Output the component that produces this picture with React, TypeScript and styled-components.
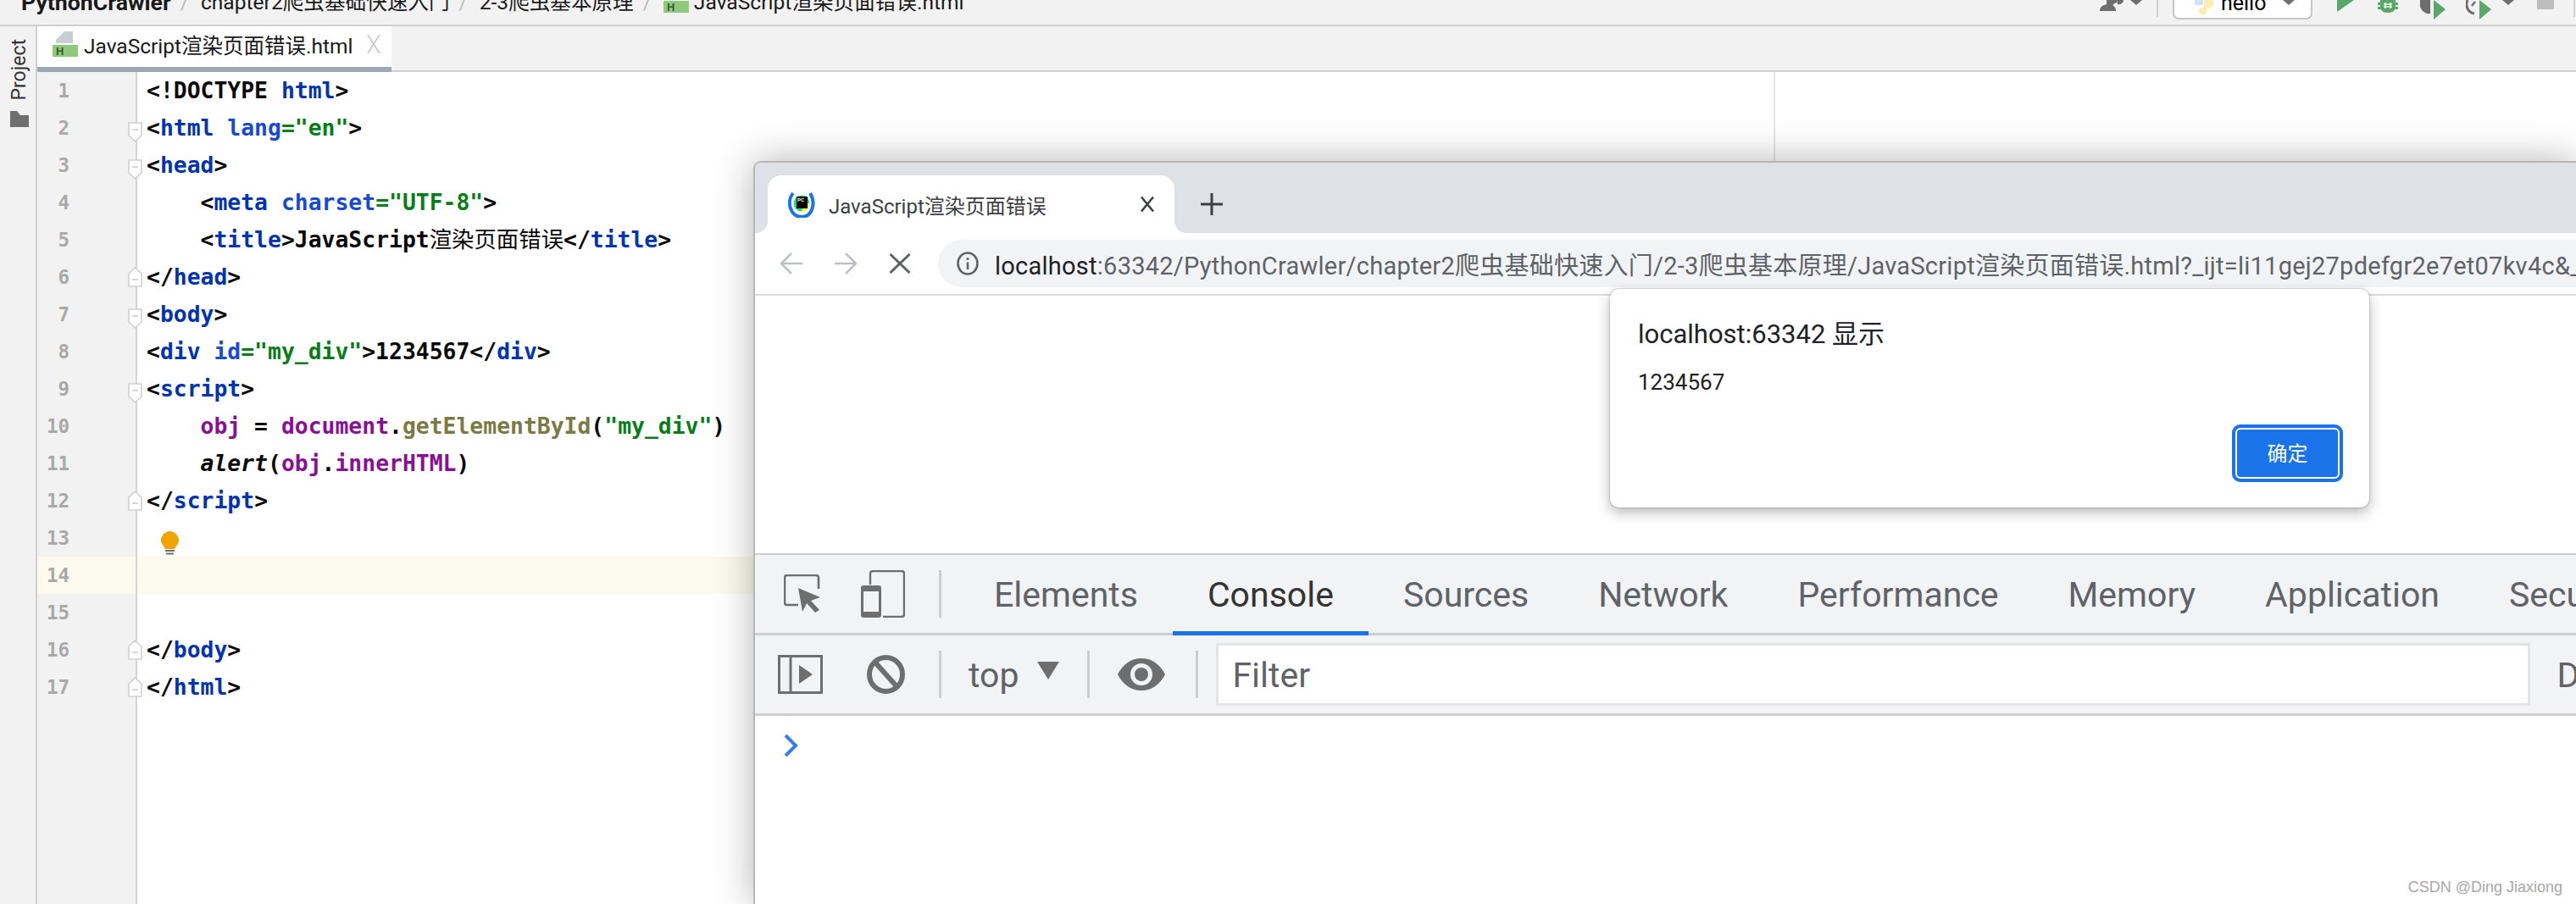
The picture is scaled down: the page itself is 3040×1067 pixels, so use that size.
import React from 'react'
import styled, { createGlobalStyle } from 'styled-components'

const UI_FONT = '"Roboto", "Noto Sans CJK SC", sans-serif'
const MONO_FONT = '"DejaVu Sans Mono", "Noto Sans CJK SC", monospace'

const Global = createGlobalStyle`
  html, body { margin: 0; padding: 0; background: #fff; }
  body { width: 3040px; height: 1067px; overflow: hidden; font-family: ${UI_FONT}; }
`

const Page = styled.div`
  position: relative;
  width: 3040px;
  height: 1067px;
  overflow: hidden;
  display: flex;
  flex-direction: column;
  background: #fff;
`

/* ---------- ide top bar ---------- */
const NavBar = styled.div`
  height: 29px;
  flex-shrink: 0;
  display: flex;
  justify-content: space-between;
  background: #f2f2f2;
  border-bottom: 2px solid #d0d0d0;
  overflow: hidden;
`
const Crumbs = styled.div`
  display: flex;
  align-items: flex-end;
  padding-left: 25px;
  padding-bottom: 8px;
  font-size: 24.6px;
  line-height: 36px;
  color: #1a1a1a;
  white-space: nowrap;
`
const CrumbBold = styled.span`
  font-weight: 700;
  font-size: 26.7px;
`
const CrumbSep = styled.span`
  color: #bdbdbd;
  margin: 0 14px 0 11px;
`
const NavTools = styled.div`
  display: flex;
  align-items: flex-start;
  padding-right: 1px;
`
const NavIcon = styled.svg<{ $ml: number }>`
  display: block;
  flex-shrink: 0;
  margin-left: ${(p) => p.$ml}px;
`
const NavSep = styled.div<{ $ml: number }>`
  width: 2px;
  height: 20px;
  flex-shrink: 0;
  margin-left: ${(p) => p.$ml}px;
  background: #d0d0d0;
`
const Combo = styled.div`
  width: 165px;
  height: 23px;
  flex-shrink: 0;
  box-sizing: border-box;
  margin-left: 17px;
  display: flex;
  align-items: flex-end;
  background: #fff;
  border: 2px solid #c6c6c6;
  border-top: none;
  border-radius: 0 0 7px 7px;
  overflow: hidden;
  font-size: 25px;
  line-height: 30px;
  color: #000;
`
const ComboText = styled.span`
  margin-left: 9px;
  margin-bottom: 2px;
`

/* ---------- ide body ---------- */
const Body = styled.div`
  flex: 1;
  min-height: 0;
  display: flex;
`
const ToolStrip = styled.div`
  width: 44px;
  flex-shrink: 0;
  box-sizing: border-box;
  display: flex;
  flex-direction: column;
  align-items: center;
  padding: 15px 0 0 4px;
  gap: 13px;
  background: #f2f2f2;
  border-right: 2px solid #d0d0d0;
`
const ToolLabel = styled.div`
  writing-mode: vertical-rl;
  transform: rotate(180deg);
  font-size: 23px;
  line-height: 28px;
  color: #333;
`
const Main = styled.div`
  flex: 1;
  min-width: 0;
  display: flex;
  flex-direction: column;
`
const TabBar = styled.div`
  height: 52px;
  flex-shrink: 0;
  display: flex;
  background: #f2f2f2;
  border-bottom: 2px solid #d0d0d0;
`
const FileTab = styled.div`
  width: 418px;
  height: 54px;
  box-sizing: border-box;
  display: flex;
  align-items: center;
  padding: 0 0 6px 18px;
  background: #fff;
  border-bottom: 6px solid #9ca7b8;
  font-size: 24.5px;
  color: #1a1a1a;
  white-space: nowrap;
`
const FileTabName = styled.span`
  margin-left: 7px;
`
const FileTabClose = styled.svg`
  margin-left: 16px;
  flex-shrink: 0;
`
const Editor = styled.div`
  flex: 1;
  min-height: 0;
  display: flex;
`
const Gutter = styled.div`
  width: 116px;
  flex-shrink: 0;
  background: #f2f2f2;
  border-right: 2px solid #d4d4d4;
`
const GutterRow = styled.div<{ $active: boolean }>`
  position: relative;
  height: 44px;
  box-sizing: border-box;
  padding-left: 11px;
  width: 100%;
  background: ${(p) => (p.$active ? '#fcfaed' : 'transparent')};
  font: 700 22.5px/44px ${MONO_FONT};
  color: #a9a9a9;
`
const LineNo = styled.div`
  width: 27px;
  text-align: right;
`
const FoldMark = styled.svg<{ $end: boolean }>`
  position: absolute;
  left: 107px;
  top: ${(p) => (p.$end ? 10 : 15)}px;
`
const Code = styled.div`
  flex: 1;
  min-width: 0;
  background: linear-gradient(#e4e4e4, #e4e4e4) no-repeat 1931px 0 / 2px 100%;
`
const CodeRow = styled.div<{ $active: boolean }>`
  height: 44px;
  display: flex;
  align-items: center;
  padding-left: 11px;
  background: ${(p) => (p.$active ? '#fcfaed' : 'transparent')};
  font: 700 26.4px/44px ${MONO_FONT};
  white-space: pre;
`
const TOKEN_COLORS: Record<string, string> = {
  p: '#080808',
  tag: '#0033b3',
  attr: '#174ad4',
  str: '#067d17',
  ref: '#871094',
  fn: '#7a7a43',
}
const Token = styled.span<{ $k: string }>`
  color: ${(p) => TOKEN_COLORS[p.$k === 'it' || p.$k === 'cjk' ? 'p' : p.$k]};
  font-style: ${(p) => (p.$k === 'it' ? 'italic' : 'normal')};
  font-weight: ${(p) => (p.$k === 'cjk' ? 400 : 700)};
`
const Bulb = styled.svg`
  margin: 12px 0 0 17px;
`

/* ---------- browser window ---------- */
const BrowserWindow = styled.div`
  position: absolute;
  left: 889px;
  top: 190px;
  right: 0;
  bottom: 0;
  display: flex;
  flex-direction: column;
  overflow: hidden;
  background: #fff;
  border-top: 2px solid #b6b6b6;
  border-left: 2px solid #b6b6b6;
  border-top-left-radius: 9px;
  box-shadow: 0 0 46px rgba(0, 0, 0, 0.3);
`
const TabStrip = styled.div`
  height: 68px;
  flex-shrink: 0;
  display: flex;
  align-items: center;
  padding: 15px 0 0 15px;
  background: #dee1e6;
`
const PageTab = styled.div`
  position: relative;
  width: 480px;
  height: 68px;
  box-sizing: border-box;
  display: flex;
  align-items: center;
  padding: 0 24px;
  background: #fff;
  border-radius: 16px 16px 0 0;
  font-size: 24px;
  color: #3c4043;
  white-space: nowrap;
  &::before,
  &::after {
    content: '';
    position: absolute;
    bottom: 0;
    width: 15px;
    height: 15px;
  }
  &::before {
    left: -15px;
    background: radial-gradient(circle at 0 0, #dee1e6 15px, #fff 15.5px);
  }
  &::after {
    right: -15px;
    background: radial-gradient(circle at 100% 0, #dee1e6 15px, #fff 15.5px);
  }
`
const PageTabTitle = styled.span`
  margin-left: 16px;
  flex: 1;
`
const NewTab = styled.svg`
  margin-left: 31px;
  flex-shrink: 0;
`
const UrlBar = styled.div`
  height: 72px;
  flex-shrink: 0;
  display: flex;
  align-items: center;
  padding-left: 29px;
  background: #fff;
  border-bottom: 2px solid #dadce0;
`
const BarIcon = styled.svg<{ $ml?: number }>`
  flex-shrink: 0;
  display: block;
  margin-left: ${(p) => p.$ml ?? 0}px;
`
const Omnibox = styled.div`
  flex: 1;
  height: 56px;
  margin-left: 32px;
  display: flex;
  align-items: center;
  padding-left: 22px;
  background: #f1f3f4;
  border-radius: 28px 0 0 28px;
  font-size: 29px;
  letter-spacing: 0.25px;
  color: #5f6368;
  white-space: nowrap;
  overflow: hidden;
`
const UrlText = styled.span`
  margin-left: 19px;
`
const UrlHost = styled.span`
  color: #202124;
`
const Viewport = styled.div`
  height: 304px;
  flex-shrink: 0;
  background: #fff;
`
const DevTools = styled.div`
  flex: 1;
  display: flex;
  flex-direction: column;
  background: #fff;
  border-top: 2px solid #cbcdd1;
`
const PanelBar = styled.div`
  height: 92px;
  flex-shrink: 0;
  display: flex;
  align-items: center;
  padding-left: 34px;
  background: #f1f3f4;
  border-bottom: 3px solid #cbcdd1;
`
const Divider = styled.div<{ $ml: number; $h: number }>`
  width: 3px;
  height: ${(p) => p.$h}px;
  flex-shrink: 0;
  margin-left: ${(p) => p.$ml}px;
  background: #cbcdd1;
`
const PanelTabs = styled.div`
  align-self: stretch;
  display: flex;
  margin-left: 21px;
`
const PanelTab = styled.div<{ $active?: boolean }>`
  height: 95px;
  box-sizing: border-box;
  padding: 3px 41px 0;
  display: flex;
  align-items: center;
  flex-shrink: 0;
  border-bottom: 5px solid ${(p) => (p.$active ? '#1a73e8' : 'transparent')};
  font-size: 41px;
  color: ${(p) => (p.$active ? '#333' : '#5f6368')};
`
const ConsoleBar = styled(PanelBar)`
  padding-left: 27px;
  font-size: 41px;
  color: #5f6368;
`
const ContextName = styled.span`
  margin-left: 32px;
  padding-top: 2px;
  flex-shrink: 0;
`
const FilterBox = styled.div`
  width: 1551px;
  height: 74px;
  box-sizing: border-box;
  flex-shrink: 0;
  margin-left: 21px;
  padding: 2px 0 0 16px;
  display: flex;
  align-items: center;
  background: #fff;
  border: 3px solid #e4e4e4;
`
const Levels = styled.span`
  margin-left: 31px;
  padding-top: 2px;
  flex-shrink: 0;
`
const ConsoleArea = styled.div`
  padding: 22px 0 0 34px;
`

/* ---------- alert ---------- */
const AlertBox = styled.div`
  position: absolute;
  left: 1009px;
  top: 149px;
  width: 896px;
  height: 258px;
  box-sizing: border-box;
  padding: 34px 31px 0 33px;
  display: flex;
  flex-direction: column;
  background: #fff;
  border-radius: 10px;
  box-shadow: 0 0 2px rgba(0, 0, 0, 0.45), 0 6px 16px rgba(0, 0, 0, 0.28);
`
const AlertTitle = styled.div`
  font-size: 31px;
  line-height: 40px;
  color: #202124;
`
const AlertText = styled.div`
  margin-top: 18px;
  font-size: 26px;
  line-height: 36px;
  color: #202124;
`
const AlertButton = styled.button`
  align-self: flex-end;
  width: 131px;
  height: 68px;
  margin-top: 32px;
  padding: 0 0 3px;
  border: none;
  border-radius: 10px;
  background: #1a73e8;
  box-shadow: inset 0 0 0 4px #1a73e8, inset 0 0 0 6px #fff;
  font: 24px ${UI_FONT};
  color: #fff;
`
const Watermark = styled.div`
  position: absolute;
  right: 16px;
  bottom: 8px;
  font: 18px/24px "Liberation Sans", sans-serif;
  color: #a8a8a8;
`

type Tok = [string, string]
const t = (k: string, s: string): Tok => [k, s]

const CODE: Tok[][] = [
  [t('p', '<!DOCTYPE '), t('tag', 'html'), t('p', '>')],
  [t('p', '<'), t('tag', 'html'), t('p', ' '), t('attr', 'lang'), t('str', '="en"'), t('p', '>')],
  [t('p', '<'), t('tag', 'head'), t('p', '>')],
  [t('p', '    <'), t('tag', 'meta'), t('p', ' '), t('attr', 'charset'), t('str', '="UTF-8"'), t('p', '>')],
  [t('p', '    <'), t('tag', 'title'), t('p', '>JavaScript'), t('cjk', '渲染页面错误'), t('p', '</'), t('tag', 'title'), t('p', '>')],
  [t('p', '</'), t('tag', 'head'), t('p', '>')],
  [t('p', '<'), t('tag', 'body'), t('p', '>')],
  [t('p', '<'), t('tag', 'div'), t('p', ' '), t('attr', 'id'), t('str', '="my_div"'), t('p', '>1234567</'), t('tag', 'div'), t('p', '>')],
  [t('p', '<'), t('tag', 'script'), t('p', '>')],
  [t('p', '    '), t('ref', 'obj'), t('p', ' = '), t('ref', 'document'), t('p', '.'), t('fn', 'getElementById'), t('p', '('), t('str', '"my_div"'), t('p', ')')],
  [t('p', '    '), t('it', 'alert'), t('p', '('), t('ref', 'obj'), t('p', '.'), t('ref', 'innerHTML'), t('p', ')')],
  [t('p', '</'), t('tag', 'script'), t('p', '>')],
  [],
  [],
  [],
  [t('p', '</'), t('tag', 'body'), t('p', '>')],
  [t('p', '</'), t('tag', 'html'), t('p', '>')],
]
const FOLD_OPEN = [2, 3, 7, 9]
const FOLD_END = [6, 12, 16, 17]
const ACTIVE_LINE = 14
const ROW_NUMBERS = Array.from({ length: 24 }, (_, i) => i + 1)
const PANELS = ['Elements', 'Console', 'Sources', 'Network', 'Performance', 'Memory', 'Application', 'Security']

const Fold = ({ end }: { end: boolean }) => (
  <FoldMark $end={end} width="17" height="24" viewBox="0 0 17 24">
    <path
      d={end ? 'M1 23V8L8.5 1 16 8V23Z' : 'M1 1H16V16L8.5 23 1 16Z'}
      fill="#fff"
      stroke="#d0d0d0"
      strokeWidth="1.6"
    />
    <path d={end ? 'M5 15H12' : 'M5 9H12'} stroke="#c8c8c8" strokeWidth="1.4" />
  </FoldMark>
)

const HBadge = () => (
  <>
    <rect x="0" y="0" width="30" height="14" fill="#8fc97b" />
    <text x="4" y="12" fontSize="13" fontWeight="700" fontFamily="Liberation Sans" fill="#3b5a32">
      H
    </text>
  </>
)

const App: React.FC = () => {
  return (
    <Page>
      <Global />
      <NavBar>
        <Crumbs>
          <CrumbBold>PythonCrawler</CrumbBold>
          <CrumbSep>/</CrumbSep>
          chapter2爬虫基础快速入门
          <CrumbSep>/</CrumbSep>
          2-3爬虫基本原理
          <CrumbSep>/</CrumbSep>
          <svg width="30" height="14" viewBox="0 0 30 14" style={{ marginBottom: 6, marginRight: 6 }}>
            <HBadge />
          </svg>
          JavaScript渲染页面错误.html
        </Crumbs>
        <NavTools>
          <NavIcon $ml={0} width="28" height="13" viewBox="0 0 28 13">
            <path d="M0 13C0 8 4 6 8 5L8 0H20V3C16 4 15 6 16 7 18 8 19 10 19 13Z" fill="#6e6e6e" />
            <path d="M20 0H28C28 3 25 6 21 5Z" fill="#6e6e6e" />
          </NavIcon>
          <NavIcon $ml={8} width="14" height="6" viewBox="0 0 14 6">
            <path d="M0 0H14L7 6Z" fill="#6e6e6e" />
          </NavIcon>
          <NavSep $ml={17} />
          <Combo>
            <svg width="22" height="17" viewBox="0 0 22 17" style={{ marginLeft: 24, marginBottom: 4 }}>
              <path d="M0 0H10V6H0Z" fill="#cfe4f2" />
              <path d="M11 0H22V6C22 9 19 10 16 10H14V17H9C6 17 5 15 5 13V10C8 10 11 9 11 6Z" fill="#fbeeb0" />
            </svg>
            <ComboText>hello</ComboText>
            <svg width="14" height="6" viewBox="0 0 14 6" style={{ marginLeft: 20, alignSelf: 'flex-start' }}>
              <path d="M0 0H14L7 6Z" fill="#6e6e6e" />
            </svg>
          </Combo>
          <NavIcon $ml={29} width="20" height="14" viewBox="0 0 20 14">
            <path d="M0 0H20L0 14Z" fill="#59a869" />
          </NavIcon>
          <NavIcon $ml={28} width="24" height="15" viewBox="0 0 24 15">
            <path d="M3 0H21V3H24V6H21V8H24V11H20C19 14 16 15 12 15 8 15 5 14 4 11H0V8H3V6H0V3H3Z" fill="#59a869" />
            <path d="M9 3V10M15 3V10M7 5H17M7 8H17" stroke="#f2f2f2" strokeWidth="1.5" />
          </NavIcon>
          <NavIcon $ml={26} width="30" height="24" viewBox="0 0 30 24">
            <path d="M0 0H12V16C8 17 2 14 0 8Z" fill="#6e6e6e" />
            <path d="M16 0L30 11 16 23Z" fill="#59a869" />
          </NavIcon>
          <NavIcon $ml={24} width="30" height="24" viewBox="0 0 30 24">
            <path d="M2 0C-1 6 2 15 10 16" fill="none" stroke="#6e6e6e" strokeWidth="3" />
            <path d="M7 7L11 2" stroke="#6e6e6e" strokeWidth="2.5" />
            <path d="M16 0L30 11 16 23Z" fill="#59a869" />
          </NavIcon>
          <NavIcon $ml={13} width="14" height="6" viewBox="0 0 14 6">
            <path d="M0 0H14L7 6Z" fill="#6e6e6e" />
          </NavIcon>
          <NavIcon $ml={27} width="20" height="11" viewBox="0 0 20 11">
            <rect width="20" height="11" fill="#bdbdbd" />
          </NavIcon>
          <NavSep $ml={23} />
        </NavTools>
      </NavBar>

      <Body>
        <ToolStrip>
          <ToolLabel>Project</ToolLabel>
          <svg width="22" height="19" viewBox="0 0 22 19">
            <path d="M0 0H8L12 5H22V19H0Z" fill="#6e6e6e" />
          </svg>
        </ToolStrip>
        <Main>
          <TabBar>
            <FileTab>
              <svg width="30" height="30" viewBox="0 0 30 30">
                <path d="M14 0H24V14H4V10Z" fill="#c9ced4" />
                <g transform="translate(0 16)">
                  <HBadge />
                </g>
              </svg>
              <FileTabName>JavaScript渲染页面错误.html</FileTabName>
              <FileTabClose width="16" height="24" viewBox="0 0 16 24">
                <path d="M1 1L15 23M15 1L1 23" stroke="#c8c8c8" strokeWidth="1.8" />
              </FileTabClose>
            </FileTab>
          </TabBar>
          <Editor>
            <Gutter>
              {ROW_NUMBERS.map((n) => (
                <GutterRow key={n} $active={n === ACTIVE_LINE}>
                  <LineNo>{n <= CODE.length ? n : ''}</LineNo>
                  {FOLD_OPEN.includes(n) && <Fold end={false} />}
                  {FOLD_END.includes(n) && <Fold end />}
                </GutterRow>
              ))}
            </Gutter>
            <Code>
              {CODE.map((line, i) => (
                <CodeRow key={i} $active={i + 1 === ACTIVE_LINE}>
                  {line.map(([k, s], j) => (
                    <Token key={j} $k={k}>
                      {s}
                    </Token>
                  ))}
                  {i === 12 && (
                    <Bulb width="21" height="28" viewBox="0 0 21 28">
                      <path d="M10.5 0C16 0 21 5 21 11 21 15 17 18 16 21H5C4 18 0 15 0 11 0 5 5 0 10.5 0Z" fill="#f0a400" />
                      <path d="M5 23H16M6 26.5H15" stroke="#6e6e6e" strokeWidth="2" />
                    </Bulb>
                  )}
                </CodeRow>
              ))}
            </Code>
          </Editor>
        </Main>
      </Body>

      <BrowserWindow>
        <TabStrip>
          <PageTab>
            <svg width="32" height="32" viewBox="0 0 32 32">
              <path d="M6 3C-2 12 2 31 16 31 29 31 33 14 26 3" fill="none" stroke="#1a73e8" strokeWidth="4" />
              <circle cx="16" cy="15" r="9.5" fill="#21d789" />
              <path d="M16 25C21 25 26 21 26 15L18 15Z" fill="#fcf84a" />
              <rect x="10" y="7" width="13" height="14" fill="#000" />
              <text x="11" y="13" fontSize="6" fontWeight="700" fontFamily="Liberation Sans" fill="#fff">
                PC
              </text>
            </svg>
            <PageTabTitle>JavaScript渲染页面错误</PageTabTitle>
            <svg width="16" height="20" viewBox="0 0 16 20">
              <path d="M1 1.5L15 18.5M15 1.5L1 18.5" stroke="#3c4043" strokeWidth="2.6" />
            </svg>
          </PageTab>
          <NewTab width="26" height="26" viewBox="0 0 26 26">
            <path d="M13 0V26M0 13H26" stroke="#3c4043" strokeWidth="3" />
          </NewTab>
        </TabStrip>
        <UrlBar>
          <BarIcon width="28" height="26" viewBox="0 0 28 26">
            <path d="M27 13H3M14 1L2 13 14 25" fill="none" stroke="#bdc1c6" strokeWidth="2.6" />
          </BarIcon>
          <BarIcon $ml={37} width="27" height="26" viewBox="0 0 27 26">
            <path d="M0 13H24M13 1L25 13 13 25" fill="none" stroke="#bdc1c6" strokeWidth="2.6" />
          </BarIcon>
          <BarIcon $ml={37} width="26" height="24" viewBox="0 0 26 24">
            <path d="M1.5 1L24.5 23M24.5 1L1.5 23" stroke="#5f6368" strokeWidth="3" />
          </BarIcon>
          <Omnibox>
            <BarIcon width="26" height="28" viewBox="0 0 26 28">
              <ellipse cx="13" cy="14" rx="11.5" ry="12.5" fill="none" stroke="#5f6368" strokeWidth="2.6" />
              <path d="M13 12.5V21" stroke="#5f6368" strokeWidth="2.6" />
              <circle cx="13" cy="8.5" r="1.6" fill="#5f6368" />
            </BarIcon>
            <UrlText>
              <UrlHost>localhost</UrlHost>
              :63342/PythonCrawler/chapter2爬虫基础快速入门/2-3爬虫基本原理/JavaScript渲染页面错误.html?_ijt=li11gej27pdefgr2e7et07kv4c&amp;_
            </UrlText>
          </Omnibox>
        </UrlBar>
        <Viewport />
        <DevTools>
          <PanelBar>
            <BarIcon width="44" height="46" viewBox="0 0 44 46">
              <path d="M17 36H4C2 36 1 35 1 33V4C1 2 2 1 4 1H38C40 1 41 2 41 4V17" fill="none" stroke="#6e6e6e" strokeWidth="2.6" />
              <path d="M17 16L43 27 32 31 42 42 37 45 27 34 22 44Z" fill="#6e6e6e" />
            </BarIcon>
            <BarIcon $ml={47} width="52" height="56" viewBox="0 0 52 56">
              <path d="M11 17V4C11 2 13 1 15 1H48C50 1 51 2 51 4V52C51 54 50 55 48 55H26" fill="none" stroke="#6e6e6e" strokeWidth="2.4" />
              <path d="M3 18H21C23 18 24 19 24 21V53C24 55 23 56 21 56H3C1 56 0 55 0 53V21C0 19 1 18 3 18ZM3 25V49H21V25Z" fill="#6e6e6e" fillRule="evenodd" />
            </BarIcon>
            <Divider $ml={40} $h={56} />
            <PanelTabs>
              {PANELS.map((name) => (
                <PanelTab key={name} $active={name === 'Console'}>
                  {name}
                </PanelTab>
              ))}
            </PanelTabs>
          </PanelBar>
          <ConsoleBar>
            <BarIcon width="53" height="46" viewBox="0 0 53 46">
              <path d="M1.5 1.5H51.5V44.5H1.5ZM15 1.5V44.5" fill="none" stroke="#6e6e6e" strokeWidth="3" />
              <path d="M25 12L41 23 25 34Z" fill="#6e6e6e" />
            </BarIcon>
            <BarIcon $ml={52} width="45" height="46" viewBox="0 0 45 46">
              <ellipse cx="22.5" cy="23" rx="19.5" ry="20" fill="none" stroke="#6e6e6e" strokeWidth="6" />
              <path d="M10 9L35 37" stroke="#6e6e6e" strokeWidth="6" />
            </BarIcon>
            <Divider $ml={40} $h={56} />
            <ContextName>top</ContextName>
            <BarIcon $ml={22} width="26" height="21" viewBox="0 0 26 21" style={{ marginBottom: 10 }}>
              <path d="M0 0H26L13 21Z" fill="#6e6e6e" />
            </BarIcon>
            <Divider $ml={33} $h={56} />
            <BarIcon $ml={33} width="56" height="38" viewBox="0 0 56 38">
              <path d="M0 19C6 7 16 0 28 0S50 7 56 19C50 31 40 38 28 38S6 31 0 19Z" fill="#6e6e6e" />
              <circle cx="28" cy="19" r="13" fill="#f1f3f4" />
              <circle cx="28" cy="19" r="8" fill="#6e6e6e" />
            </BarIcon>
            <Divider $ml={36} $h={56} />
            <FilterBox>Filter</FilterBox>
            <Levels>Default levels</Levels>
          </ConsoleBar>
          <ConsoleArea>
            <BarIcon width="17" height="26" viewBox="0 0 17 26">
              <path d="M2 1L14 13 2 25" fill="none" stroke="#367cf1" strokeWidth="4" />
            </BarIcon>
          </ConsoleArea>
        </DevTools>
        <AlertBox>
          <AlertTitle>localhost:63342 显示</AlertTitle>
          <AlertText>1234567</AlertText>
          <AlertButton>确定</AlertButton>
        </AlertBox>
      </BrowserWindow>
      <Watermark>CSDN @Ding Jiaxiong</Watermark>
    </Page>
  )
}

export default App
